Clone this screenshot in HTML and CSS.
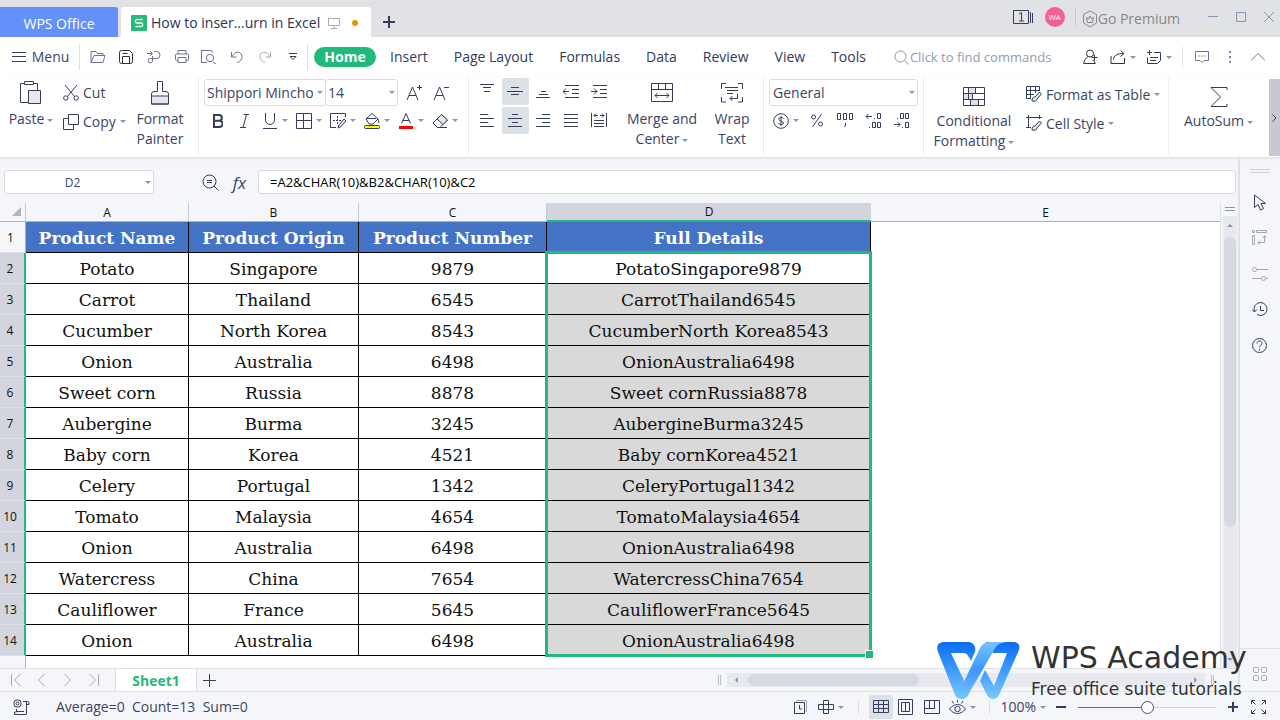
FILE: index.html
```html
<!DOCTYPE html>
<html lang="en">
<head>
    <meta charset="UTF-8">
    <meta name="viewport" content="width=device-width, initial-scale=1.0">
    <title>How to insert a carriage return in Excel - WPS Office</title>
    <link rel="stylesheet" href="styles.css">
</head>
<body>
    <!-- title bar -->
    <header class="titlebar">
        <button class="wps-tab">WPS Office</button>
        <div class="doc-tab">
            <svg width="16" height="16" viewBox="0 0 16 16"><rect width="16" height="16" rx="1" fill="#22bb7b"/><path d="M11.5 4.5H6a1.5 1.5 0 0 0 0 3.500h4a1.700 1.700 0 0 1 0 3.500H4.500" fill="none" stroke="#fff" stroke-width="1.300"/></svg>
            <span class="doc-name">How to inser...urn in Excel</span>
            <svg class="line pale" width="12" height="13" viewBox="0 0 12 13"><path d="M.5 1.500h11v7H.5zM6 8.500v3M3 11.500h6"/></svg>
            <i class="unsaved"></i>
        </div>
        <button class="new-tab" aria-label="New tab"><svg class="line bold" width="12" height="12" viewBox="0 0 12 12"><path d="M6 0v12M0 6h12"/></svg></button>
        <div class="title-right">
            <svg class="line" width="20" height="14" viewBox="0 0 20 14"><path d="M.5.500h15v13H.5zM17.500 2v11M19.500 3v10M6 4l2.500-1.500V11M6 11h5"/></svg>
            <span class="avatar">WA</span>
            <i class="title-sep"></i>
            <a class="premium" href="#"><svg class="line" width="16" height="18" viewBox="0 0 16 18"><path d="M8 1l6.500 3.500v8.500L8 17l-6.500-4V4.500zM4.500 7.500l1 5h5l1-5-2 1.500L8 6 6.500 9z"/></svg>Go Premium</a>
            <button aria-label="Minimize"><svg class="line blue" width="10" height="10" viewBox="0 0 10 10"><path d="M0 4.500h10"/></svg></button>
            <button aria-label="Maximize"><svg class="line blue" width="10" height="10" viewBox="0 0 10 10"><path d="M.5.500h9v9h-9z"/></svg></button>
            <button aria-label="Close"><svg class="line blue" width="10" height="10" viewBox="0 0 10 10"><path d="M0 0l10 10M10 0L0 10"/></svg></button>
        </div>
    </header>

    <!-- menu bar -->
    <nav class="menubar">
        <button class="menu-btn"><svg class="line" width="14" height="12" viewBox="0 0 14 12"><path d="M0 1.500h14M0 5.500h14M0 10.500h14"/></svg>Menu</button>
        <div class="quick">
            <button aria-label="Open"><svg class="line gray" width="16" height="14" viewBox="0 0 16 14"><path d="M1 12.500V1.500h5l1.500 2h5.500v2M1 12.500l3-7h11l-2 7z"/></svg></button>
            <button aria-label="Save"><svg class="line dark" width="14" height="14" viewBox="0 0 14 14"><path d="M2.500.500h8l3 3v8a2 2 0 0 1-2 2h-9a2 2 0 0 1-2-2v-9a2 2 0 0 1 2-2zM3.500 13V6.500h7V13M3.500 3.500h5"/></svg></button>
            <button aria-label="Export"><svg class="line gray" width="14" height="14" viewBox="0 0 14 14"><path d="M0 3.500h5M3 1l2.500 2.500L3 6M7 1.500h2.500a3.500 3.500 0 0 1 0 7H3a2.200 2.200 0 1 0 2.500 2.500V6"/></svg></button>
            <button aria-label="Print"><svg class="line gray" width="14" height="14" viewBox="0 0 14 14"><path d="M3 4V.500h8V4M3 10.500H1.500a1 1 0 0 1-1-1V5a1 1 0 0 1 1-1h11a1 1 0 0 1 1 1v4.500a1 1 0 0 1-1 1H11M3 7.500h8v5H3z"/></svg></button>
            <button aria-label="Preview"><svg class="line gray" width="16" height="14" viewBox="0 0 16 14"><path d="M11.500 2.500a2 2 0 0 0-2-2h-9v12H6M12 12l3 2"/><circle cx="9" cy="8" r="3.700"/></svg></button>
            <button aria-label="Undo"><svg class="line gray" width="12" height="12" viewBox="0 0 12 12"><path d="M.5 1v5h5M.5 6l3-3.500c3-2.500 7.500-1 7.500 3S8 11 6 11.500"/></svg></button>
            <button aria-label="Redo"><svg class="line pale" width="12" height="12" viewBox="0 0 12 12"><path d="M11.500 1v5h-5M11.500 6l-3-3.500c-3-2.500-7.500-1-7.500 3S4 11 6 11.500"/></svg></button>
            <button aria-label="Customize"><svg class="line" width="8" height="8" viewBox="0 0 8 8"><path d="M0 .500h8M1 3.500h6L4 6.500z"/></svg></button>
        </div>
        <div class="tabs">
            <a class="tab active" href="#">Home</a>
            <a class="tab" href="#">Insert</a>
            <a class="tab" href="#">Page Layout</a>
            <a class="tab" href="#">Formulas</a>
            <a class="tab" href="#">Data</a>
            <a class="tab" href="#">Review</a>
            <a class="tab" href="#">View</a>
            <a class="tab" href="#">Tools</a>
        </div>
        <label class="search">
            <svg class="line blue" width="15" height="15" viewBox="0 0 15 15"><circle cx="6.500" cy="6.500" r="5.500"/><path d="M10.500 10.500l4 4"/></svg>
            <input type="text" placeholder="Click to find commands" aria-label="Click to find commands">
        </label>
        <div class="menu-right">
            <button aria-label="Collaborate"><svg class="line dark" width="16" height="16" viewBox="0 0 16 16"><circle cx="7" cy="4.500" r="3.500"/><path d="M5 7.500C3 9 1 11 .8 14.500h11.500l-2-4M8.500 8.500h6M11.500 5.500v6"/></svg></button>
            <button aria-label="Share"><svg class="line dark" width="16" height="14" viewBox="0 0 16 14"><path d="M1 6v7.500h13.500V8M3.500 9.500c0-4 4-6 10-6M10.500.500l3.500 3-3.500 3"/></svg><i class="caret"></i></button>
            <button aria-label="Notes"><svg class="line" width="16" height="14" viewBox="0 0 16 14"><path d="M3.500 0v5M1 2.500h5M8 2.500h6.500v8l-3 3h-10v-6M4 7.500h8M4 10.500h6"/></svg><i class="caret"></i></button>
            <i class="menu-sep"></i>
            <button aria-label="Comments"><svg class="line gray" width="14" height="12" viewBox="0 0 14 12"><path d="M.5.500h13v9H9L7 11.500 5 9.500H.5zM3.500 5h1.500M6.300 5h1.500M9 5h1.500"/></svg></button>
            <button aria-label="More"><svg width="2" height="12" viewBox="0 0 2 12" fill="#7684a5"><path d="M0 0h2v2H0zM0 5h2v2H0zM0 10h2v2H0z"/></svg></button>
            <button aria-label="Collapse ribbon"><svg class="line gray" width="14" height="8" viewBox="0 0 14 8"><path d="M0 7.500l7-7 7 7"/></svg></button>
        </div>
    </nav>

    <!-- ribbon -->
    <section class="ribbon">
        <div class="group clipboard">
            <button class="big paste">
                <svg class="line" width="22" height="24" viewBox="0 0 22 24"><path d="M4 2.500H.5v19H8M14 2.500h3.500V9M4.500.500h9v3h-9z"/><path d="M8.500 9.500h12v13h-12z" fill="#e5e7ee"/></svg>
                <span>Paste<i class="caret"></i></span>
            </button>
            <div class="stack">
                <button class="item"><svg class="line" width="16" height="16" viewBox="0 0 16 16"><path d="M2 0l9.500 11.500M14 0L4.500 11.500"/><circle cx="2.800" cy="13" r="2.200"/><circle cx="13.200" cy="13" r="2.200"/></svg>Cut</button>
                <button class="item"><svg class="line" width="16" height="16" viewBox="0 0 16 16"><path d="M5.500.500h10v10h-10zM5 4.500H.5v11h10V11"/></svg>Copy<i class="caret"></i></button>
            </div>
            <button class="big painter">
                <svg class="line" width="20" height="24" viewBox="0 0 20 24"><path d="M1.500 15h17v8h-17z" fill="#e5e7ee"/><path d="M7.500 10.500v-10h5v10h3.500a2.500 2.500 0 0 1 2.500 2.500v10h-17V13A2.500 2.500 0 0 1 4 10.500z"/></svg>
                <span>Format<br>Painter</span>
            </button>
        </div>

        <div class="group font">
            <div class="row">
                <div class="combo family"><select aria-label="Font"><option>Shippori Mincho</option></select><i class="caret"></i></div>
                <div class="combo size"><select aria-label="Font size"><option>14</option></select><i class="caret"></i></div>
                <button class="slot" aria-label="Increase font size"><svg class="line" width="17" height="16" viewBox="0 0 17 16"><path d="M1 15L6.500 2 12 15M3 10.500h7M11 2.500h5M13.500 0v5"/></svg></button>
                <button class="slot" aria-label="Decrease font size"><svg class="line" width="17" height="16" viewBox="0 0 17 16"><path d="M1 15L6.500 2 12 15M3 10.500h7M11 2.500h5"/></svg></button>
            </div>
            <div class="row">
                <button class="slot" aria-label="Bold"><svg class="line bold" width="11" height="14" viewBox="0 0 11 14"><path d="M2 1h5a2.800 2.800 0 0 1 0 5.700H2h5.500a3 3 0 0 1 0 6.300H2z"/></svg></button>
                <button class="slot" aria-label="Italic"><svg class="line" width="9" height="14" viewBox="0 0 9 14"><path d="M3.500.500H9M0 13.500h6M6.500.500l-3.500 13"/></svg></button>
                <button class="split" aria-label="Underline"><svg class="line" width="16" height="16" viewBox="0 0 16 16"><path d="M3.500 0v7a4.500 4.500 0 0 0 9 0V0M1 15.500h14"/></svg><i class="caret"></i></button>
                <button class="split" aria-label="Borders"><svg class="line" width="16" height="16" viewBox="0 0 16 16"><path d="M.5.500h15v15H.5zM7.500 0v16M0 7.500h16"/></svg><i class="caret"></i></button>
                <button class="split" aria-label="Draw border"><svg class="line" width="16" height="16" viewBox="0 0 16 16"><path d="M15.500 4V.500H.5v14H6"/><path d="M7.500 3v9M3 7.500h9" stroke-dasharray="2 1"/><path d="M8 15l1-3 5-6 2 2-5.500 6z" fill="#e5e7ee"/></svg><i class="caret"></i></button>
                <button class="split" aria-label="Fill color"><svg class="line" width="16" height="16" viewBox="0 0 16 16"><path d="M2 6l6-5.500 6 5.500-5 5H5zM3 5.500h9M14 6l1 4"/><rect x=".500" y="12.500" width="15" height="3" rx="1" fill="#ff0"/></svg><i class="caret"></i></button>
                <button class="split" aria-label="Font color"><svg class="line" width="16" height="16" viewBox="0 0 16 16"><path d="M3.500 10.500L8 .500l4.500 10M5 7.500h6"/><path d="M1 13h14v3H1z" fill="#f00" stroke="none"/></svg><i class="caret"></i></button>
                <button class="split" aria-label="Clear"><svg class="line" width="16" height="16" viewBox="0 0 16 16"><path d="M9.500 1.500l6 5.500-7.500 7.500H5.500L1 10z"/><path d="M9.500 1.500l6 5.500-4.500 4.500L5 6z" fill="#e5e7ee"/><path d="M5 14.500h10"/></svg><i class="caret"></i></button>
            </div>
        </div>

        <div class="group align">
            <div class="align-grid">
                <button aria-label="Top align"><svg class="line" width="15" height="15" viewBox="0 0 15 15"><path d="M0 .500h14M3 3.500h8M4 7.500h6"/></svg></button>
                <button class="on" aria-label="Middle align"><svg class="line" width="17" height="15" viewBox="0 0 17 15"><path d="M4 3.500h8M0 7.500h16M4 10.500h8"/></svg></button>
                <button aria-label="Bottom align"><svg class="line" width="15" height="15" viewBox="0 0 15 15"><path d="M5 7.500h5M3 10.500h9M0 13.500h14"/></svg></button>
                <button aria-label="Decrease indent"><svg class="line" width="17" height="13" viewBox="0 0 17 13"><path d="M2 .500h14M9 4.500h7M9 8.500h7M2 12.500h14M0 6.500h6M3 3.500l-3 3 3 3"/></svg></button>
                <button aria-label="Increase indent"><svg class="line" width="17" height="13" viewBox="0 0 17 13"><path d="M2 .500h14M9 4.500h7M9 8.500h7M2 12.500h14M0 6.500h6M3 3.500l3 3-3 3"/></svg></button>
                <button aria-label="Align left"><svg class="line" width="15" height="13" viewBox="0 0 15 13"><path d="M0 .500h8M0 4.500h14M0 8.500h8M0 12.500h14"/></svg></button>
                <button class="on" aria-label="Center"><svg class="line" width="15" height="13" viewBox="0 0 15 13"><path d="M4 .500h6M0 4.500h14M4 8.500h6M0 12.500h14"/></svg></button>
                <button aria-label="Align right"><svg class="line" width="15" height="13" viewBox="0 0 15 13"><path d="M6 .500h8M0 4.500h14M6 8.500h8M0 12.500h14"/></svg></button>
                <button aria-label="Justify"><svg class="line" width="15" height="13" viewBox="0 0 15 13"><path d="M0 .500h14M0 4.500h14M0 8.500h14M0 12.500h14"/></svg></button>
                <button aria-label="Distributed"><svg class="line" width="17" height="15" viewBox="0 0 17 15"><path d="M.5 0v14M15.500 0v14M3 2.500h4M9 2.500h4M5 .500l-2 2 2 2M11 .500l2 2-2 2M3 7.500h10M3 10.500h10M3 13.500h10"/></svg></button>
            </div>
            <button class="big merge">
                <svg class="line" width="22" height="20" viewBox="0 0 22 20"><path d="M.5.500h21v18H.5zM0 6.500h22M7.500 0v6.500M14.500 0v6.500M4 12.500h14M6.500 10l-2.500 2.500L6.500 15M15.500 10l2.500 2.500-2.500 2.500"/></svg>
                <span>Merge and<br>Center<i class="caret"></i></span>
            </button>
            <button class="big wrap">
                <svg class="line" width="22" height="20" viewBox="0 0 22 20"><path d="M5 .500H.5V6M17 .500h4.500V6M.5 14v5H5M21.500 14v5H17M4 4.500h13M6 7.500h11M6 10.500h6M16.500 10.500V15.500H9M11.500 13L9 15.500l2.500 2.500"/></svg>
                <span>Wrap<br>Text</span>
            </button>
        </div>

        <div class="group number">
            <div class="row">
                <div class="combo format"><select aria-label="Number format"><option>General</option></select><i class="caret"></i></div>
            </div>
            <div class="row">
                <button class="split" aria-label="Currency"><svg class="line" width="16" height="16" viewBox="0 0 16 16"><circle cx="8" cy="8" r="7.300"/><path d="M10.500 5.500C9 4 5.800 4.300 5.800 6.300S10.500 8 10.500 10 7 12 5.500 10.500M8 3v10"/></svg><i class="caret"></i></button>
                <button class="slot" aria-label="Percent"><svg class="line" width="12" height="13" viewBox="0 0 12 13"><circle cx="2.500" cy="3" r="2"/><circle cx="9.500" cy="10" r="2"/><path d="M10.500 0l-9 13"/></svg></button>
                <button class="slot" aria-label="Comma style"><svg class="line" width="18" height="15" viewBox="0 0 18 15"><path d="M1.500.500h3v6h-3zM7.500.500h3v6h-3zM13.500.500h3v6h-3zM9.500 10v2l-1 2"/></svg></button>
                <button class="slot" aria-label="Increase decimal"><svg class="line" width="16" height="15" viewBox="0 0 16 15"><path d="M1 3.500h6M3.500 1L1 3.500 3.500 6M9 5.500h1M12.500.500h3v5h-3zM4 14.500h1M7.500 9.500h3v5h-3zM12.500 9.500h3v5h-3z"/></svg></button>
                <button class="slot" aria-label="Decrease decimal"><svg class="line" width="16" height="15" viewBox="0 0 16 15"><path d="M4 5.500h1M7.500.500h3v5h-3zM12.500.500h3v5h-3zM1 11.500h6M4.500 9L7 11.500 4.500 14M9 14.500h1M12.500 9.500h3v5h-3z"/></svg></button>
            </div>
        </div>

        <div class="group styles">
            <button class="big cond">
                <svg class="line" width="22" height="20" viewBox="0 0 22 20"><path d="M6 1h7v5H6zM1 7h8v6H1zM8 13h7v6H8z" fill="#dfe1e8" stroke="none"/><path d="M.5.500h21v18H.5zM0 6.500h22M0 12.500h22M5.500.500v6M12.500.500v6M9.500 6.500v6M5.500 6.500v6M7.500 12.500v6M15.500 12.500v6"/></svg>
                <span>Conditional<br>Formatting<i class="caret"></i></span>
            </button>
            <div class="stack">
                <button class="item"><svg class="line" width="16" height="17" viewBox="0 0 16 17"><path d="M13.500 5V.500H.5v12H5M0 4.500h14M0 8.500h8M4.500 0v12.500M9.500 0v7"/><path d="M6 15c0-3 1-4 3-4l4.500-5 2 2-4.500 5c0 2-2 2.500-5 2z" fill="#e5e7ee"/></svg>Format as Table<i class="caret"></i></button>
                <button class="item"><svg class="line" width="16" height="17" viewBox="0 0 16 17"><path d="M0 2.500h16M2.500 0v12.500H5M13.500 0v4M0 12.500h5"/><path d="M6 15c0-3 1-4 3-4l4.500-5 2 2-4.500 5c0 2-2 2.500-5 2z" fill="#e5e7ee"/></svg>Cell Style<i class="caret"></i></button>
            </div>
        </div>

        <div class="group editing">
            <button class="big sum">
                <svg class="line" width="18" height="20" viewBox="0 0 18 20"><path d="M17 3V.500H1L10.500 10 1 19.500h16V17"/></svg>
                <span>AutoSum<i class="caret"></i></span>
            </button>
        </div>
        <button class="ribbon-scroll" aria-label="Scroll ribbon"><svg class="line" width="5" height="8" viewBox="0 0 5 8"><path d="M.5.500L4 4 .5 7.500"/></svg></button>
    </section>

    <main class="work">
        <div class="book">
            <!-- formula bar -->
            <div class="formula-bar">
                <div class="name-box"><input type="text" value="D2" aria-label="Name box"><i class="caret"></i></div>
                <button aria-label="Find"><svg class="line" width="17" height="17" viewBox="0 0 17 17"><circle cx="7.500" cy="7.500" r="6.500"/><path d="M5 6.500h5M5 8.500h5M12 12l4.500 4.500"/></svg></button>
                <button class="fx" aria-label="Insert function">fx</button>
                <input class="formula" type="text" value="=A2&amp;CHAR(10)&amp;B2&amp;CHAR(10)&amp;C2" aria-label="Formula">
            </div>

            <div class="sheet-area">
                <table class="sheet">
                    <colgroup><col class="c-num"><col class="c-a"><col class="c-b"><col class="c-c"><col class="c-d"><col></colgroup>
                    <thead>
                        <tr><th class="corner"><svg width="9" height="9" viewBox="0 0 9 9"><path d="M9 0v9H0z" fill="#b4b4b4"/></svg></th><th>A</th><th>B</th><th>C</th><th class="picked">D</th><th>E</th></tr>
                    </thead>
                    <tbody>
                        <tr class="heading"><th>1</th><td>Product Name</td><td>Product Origin</td><td>Product Number</td><td>Full Details</td><td></td></tr>
                        <tr><th>2</th><td>Potato</td><td>Singapore</td><td>9879</td><td class="current">PotatoSingapore9879<span class="selection"></span></td><td></td></tr>
                        <tr><th>3</th><td>Carrot</td><td>Thailand</td><td>6545</td><td>CarrotThailand6545</td><td></td></tr>
                        <tr><th>4</th><td>Cucumber</td><td>North Korea</td><td>8543</td><td>CucumberNorth Korea8543</td><td></td></tr>
                        <tr><th>5</th><td>Onion</td><td>Australia</td><td>6498</td><td>OnionAustralia6498</td><td></td></tr>
                        <tr><th>6</th><td>Sweet corn</td><td>Russia</td><td>8878</td><td>Sweet cornRussia8878</td><td></td></tr>
                        <tr><th>7</th><td>Aubergine</td><td>Burma</td><td>3245</td><td>AubergineBurma3245</td><td></td></tr>
                        <tr><th>8</th><td>Baby corn</td><td>Korea</td><td>4521</td><td>Baby cornKorea4521</td><td></td></tr>
                        <tr><th>9</th><td>Celery</td><td>Portugal</td><td>1342</td><td>CeleryPortugal1342</td><td></td></tr>
                        <tr><th>10</th><td>Tomato</td><td>Malaysia</td><td>4654</td><td>TomatoMalaysia4654</td><td></td></tr>
                        <tr><th>11</th><td>Onion</td><td>Australia</td><td>6498</td><td>OnionAustralia6498</td><td></td></tr>
                        <tr><th>12</th><td>Watercress</td><td>China</td><td>7654</td><td>WatercressChina7654</td><td></td></tr>
                        <tr><th>13</th><td>Cauliflower</td><td>France</td><td>5645</td><td>CauliflowerFrance5645</td><td></td></tr>
                        <tr><th>14</th><td>Onion</td><td>Australia</td><td>6498</td><td>OnionAustralia6498</td><td></td></tr>
                        <tr class="rest"><th></th><td></td><td></td><td></td><td></td><td></td></tr>
                    </tbody>
                </table>
                <div class="vscroll">
                    <svg class="line blue" width="10" height="13" viewBox="0 0 10 13"><path d="M0 4.500h10M0 7.500h10"/></svg>
                    <div class="vtrack"><i class="arrow up"></i><i class="vthumb"></i><i class="arrow down"></i></div>
                </div>
            </div>

            <!-- sheet tabs -->
            <div class="sheet-tabs">
                <div class="sheet-nav">
                    <button aria-label="First sheet"><svg class="line pale" width="10" height="12" viewBox="0 0 10 12"><path d="M.5 0v12M9.500 0l-6 6 6 6"/></svg></button>
                    <button aria-label="Previous sheet"><svg class="line pale" width="8" height="12" viewBox="0 0 8 12"><path d="M6.500 0l-6 6 6 6"/></svg></button>
                    <button aria-label="Next sheet"><svg class="line pale" width="8" height="12" viewBox="0 0 8 12"><path d="M.5 0l6 6-6 6"/></svg></button>
                    <button aria-label="Last sheet"><svg class="line pale" width="10" height="12" viewBox="0 0 10 12"><path d="M9.500 0v12M.5 0l6 6-6 6"/></svg></button>
                </div>
                <button class="sheet-tab">Sheet1</button>
                <button class="add-sheet" aria-label="Add sheet"><svg class="line" width="13" height="13" viewBox="0 0 13 13"><path d="M6.500 0v13M0 6.500h13"/></svg></button>
                <div class="hscroll">
                    <i class="grip"></i>
                    <div class="htrack"><i class="arrow left"></i><i class="hthumb"></i><i class="arrow right"></i></div>
                    <i class="grip"></i>
                </div>
            </div>
        </div>

        <aside class="side">
            <i class="side-grip"></i>
            <button aria-label="Select"><svg class="line" width="14" height="17" viewBox="0 0 14 17"><path d="M1.500 1v12.500l3.500-3 2.500 5.500 3-1.500-2.500-5h4.500z"/></svg></button>
            <button aria-label="Swap"><svg class="line pale" width="16" height="16" viewBox="0 0 16 16"><path d="M.5.500h2v2h-2zM4.500.500h10v2h-10zM.5 5.500h2v9h-2zM6 12.500h6.500V6M10.500 8l2-2.500 2 2.500M8 10.500l-2 2 2 2"/></svg></button>
            <button aria-label="Properties"><svg class="line pale" width="16" height="14" viewBox="0 0 16 14"><circle cx="2.500" cy="2.500" r="2"/><circle cx="11.500" cy="11.500" r="2"/><path d="M4.500 2.500H16M0 11.500h9.500M13.500 11.500H16"/></svg></button>
            <button aria-label="History"><svg class="line" width="16" height="16" viewBox="0 0 16 16"><path d="M2.500 9.500A6.500 6.500 0 1 1 5 12.500M0 7.500l2.500 2.500L5 7.500M8.500 4v4.500H12"/></svg></button>
            <button aria-label="Help"><svg class="line" width="16" height="16" viewBox="0 0 16 16"><circle cx="7.500" cy="7.500" r="7"/><path d="M5 5.500c0-3.300 5-3.300 5 0C10 7.500 7.500 7.500 7.500 9.500M7.500 11v1.500"/></svg></button>
            <button class="apps" aria-label="Apps"><svg class="line pale" width="14" height="14" viewBox="0 0 14 14"><rect x=".500" y=".500" width="5" height="5" rx="1"/><rect x="8.500" y=".500" width="5" height="5" rx="1"/><rect x=".500" y="8.500" width="5" height="5" rx="1"/><rect x="8.500" y="8.500" width="5" height="5" rx="1"/></svg></button>
        </aside>
    </main>

    <!-- status bar -->
    <footer class="statusbar">
        <svg class="line" width="17" height="17" viewBox="0 0 17 17"><circle cx="4.500" cy="4.500" r="3.700"/><circle cx="4.500" cy="4.500" r="1.500"/><path d="M10 2.500h4.500a1.500 1.500 0 0 1 1.500 1.500v1.500h-3M13.500 3v12M3.500 10v3h-2v2.500h12M4 12.500h7"/></svg>
        <span class="stats">Average=0&nbsp;&nbsp;Count=13&nbsp;&nbsp;Sum=0</span>
        <div class="status-right">
            <button class="slot" aria-label="Backup"><svg class="line" width="14" height="14" viewBox="0 0 14 14"><path d="M2.500 1.500V.500h10v11h-1" stroke="#a0a5b0"/><path d="M.5 2.500h10v11H.5zM5.500 5v4H8"/></svg></button>
            <button class="split" aria-label="Reading layout"><svg class="line" width="16" height="14" viewBox="0 0 16 14"><path d="M5.500.500h5v13h-5zM.5 4.500h15v5H.5z"/></svg><i class="caret"></i></button>
            <i class="status-sep"></i>
            <button class="slot on" aria-label="Normal view"><svg class="line" width="16" height="14" viewBox="0 0 16 14"><path d="M.5.500h15v12H.5zM0 4.500h16M0 8.500h16M5.500 0v13M10.500 0v13"/></svg></button>
            <button class="slot" aria-label="Page layout view"><svg class="line" width="16" height="16" viewBox="0 0 16 16"><path d="M.5.500h14v15H.5zM3.500 3.500h8v9h-8zM7.500 3.500v9"/></svg></button>
            <button class="slot" aria-label="Page break view"><svg class="line" width="16" height="14" viewBox="0 0 16 14"><path d="M.5.500h15v13H.5zM5.500 0v8.500M10.500 0v8.500M0 8.500h11"/></svg></button>
            <button class="split" aria-label="Eye protection"><svg class="line" width="17" height="15" viewBox="0 0 17 15"><path d="M.5 9c4.500-6 11.500-6 16 0-4.500 6-11.500 6-16 0zM8.500 0v2.500M3 1l1.500 2.500M14 1l-1.500 2.500"/><circle cx="8.500" cy="9" r="2.700"/></svg><i class="caret"></i></button>
            <i class="status-sep"></i>
            <button class="zoom-value">100%<i class="caret"></i></button>
            <button class="slot" aria-label="Zoom out"><svg class="line bold" width="10" height="10" viewBox="0 0 10 10"><path d="M0 5h10"/></svg></button>
            <input class="zoom" type="range" min="0" max="100" value="50" aria-label="Zoom">
            <button class="slot" aria-label="Zoom in"><svg class="line bold" width="10" height="10" viewBox="0 0 10 10"><path d="M0 5h10M5 0v10"/></svg></button>
            <button class="slot" aria-label="Full screen"><svg class="line" width="16" height="14" viewBox="0 0 16 14"><path d="M.5 4V.500H4M.5.500l4 4M11 .500h3.500V4M14.500.500l-4 4M.5 10v3.500H4M.5 13.500l4-4M11 13.500h3.500V10M14.500 13.500l-4-4"/></svg></button>
        </div>
    </footer>

    <!-- academy logo over the lower right corner -->
    <div class="watermark">
        <svg width="84" height="58" viewBox="0 0 84 58">
            <defs>
                <linearGradient id="front" x1="0" y1="0" x2="0" y2="1"><stop offset="0" stop-color="#0a6cf5"/><stop offset=".5" stop-color="#3f9bfb"/><stop offset="1" stop-color="#7cc9ff"/></linearGradient>
                <linearGradient id="fold" x1="0" y1="0" x2="0" y2="1"><stop offset="0" stop-color="#74c4ff"/><stop offset=".5" stop-color="#3f95fb"/><stop offset="1" stop-color="#78c6ff"/></linearGradient>
            </defs>
            <path d="M7 0h25q5 0 7 5 1 4-1 7l-3 7q-1-3-3-5-1-3-5-3H15l17 36-2 8q-2 2-5 2-4 0-6-4L2 10Q-1 1 7 0z" fill="url(#front)"/>
            <path d="M50 0h27q8 0 6 8L63 53q-2 4-6 4t-6-4l-7-14 5-11 9 16 13-33H57z" fill="url(#front)"/>
            <path d="M54 0h16q-9 1-12 8L32 53q-2 4-6 4t-6-4l6-9L44 6q3-6 10-6z" fill="url(#fold)"/>
        </svg>
        <div>
            <p class="brand">WPS Academy</p>
            <p class="slogan">Free office suite tutorials</p>
        </div>
    </div>
</body>
</html>
```
FILE: styles.css
```css
* {
    box-sizing: border-box;
}
body {
    margin: 0;
    min-height: 100vh;
    display: flex;
    flex-direction: column;
    position: relative;
    overflow-x: hidden;
    background: #f5f6f9;
    color: #3b4563;
    font-family: "Open Sans", "Noto Sans", sans-serif;
    font-size: 14px;
    line-height: 20px;
}
button, input, select {
    font: inherit;
    color: inherit;
    background: none;
    border: none;
    margin: 0;
    padding: 0;
}
button {
    display: flex;
    align-items: center;
    justify-content: center;
}
a {
    color: inherit;
    text-decoration: none;
}
svg {
    display: block;
    flex: none;
}

/* icons */
.line {
    fill: none;
    stroke: #343e5c;
    stroke-width: 1;
}
.line.bold {
    stroke-width: 2;
}
.line.dark {
    stroke: #333;
}
.line.gray {
    stroke: #6b7590;
}
.line.blue {
    stroke: #8795b5;
}
.line.pale {
    stroke: #a5a8b0;
}
.caret {
    display: inline-block;
    flex: none;
    width: 0;
    border: 3px solid transparent;
    border-top-color: #8795b5;
    border-bottom: none;
}

/* title bar */
.titlebar {
    display: flex;
    height: 37px;
    background: #e1e2e6;
}
.wps-tab {
    width: 118px;
    margin-top: 7px;
    padding-top: 3px;
    background: #6490fa;
    color: #fff;
    border-radius: 0 3px 0 0;
}
.doc-tab {
    display: flex;
    align-items: center;
    width: 250px;
    margin: 7px 0 0 3px;
    padding: 2px 10px 0;
    background: #fff;
    border-radius: 3px 3px 0 0;
}
.doc-name {
    margin: 0 8px 0 4px;
    white-space: nowrap;
    color: #2c3350;
}
.unsaved {
    width: 6px;
    height: 6px;
    margin-left: 12px;
    border-radius: 50%;
    background: #e59700;
}
.new-tab {
    width: 36px;
    padding-top: 7px;
}
.title-right {
    display: flex;
    align-items: center;
    height: 34px;
    margin-left: auto;
}
.title-right button {
    width: 22px;
    margin-left: 6px;
}
.avatar {
    width: 20px;
    margin: 0 10px 0 12px;
    border-radius: 50%;
    background: #f2608f;
    color: #fff;
    font-size: 8px;
    text-align: center;
}
.title-sep {
    width: 1px;
    height: 20px;
    background: #c8cad0;
}
.premium {
    display: flex;
    align-items: center;
    margin: 3px 16px 0 6px;
    color: #888;
}
.premium .line {
    stroke: #888;
}

/* menu bar */
.menubar {
    display: flex;
    align-items: center;
    height: 40px;
    background: #fff;
}
.menu-btn {
    width: 80px;
    height: 26px;
    padding-left: 2px;
    gap: 6px;
    border-right: 1px solid #dfe0e5;
}
.quick {
    display: flex;
    width: 228px;
    height: 26px;
    padding-left: 4px;
    border-right: 1px solid #dfe0e5;
}
.quick button {
    width: 28px;
}
.tabs {
    display: flex;
    gap: 26px;
    margin-left: 6px;
    color: #333c58;
    white-space: nowrap;
}
.tab.active {
    width: 62px;
    margin-right: -12px;
    background: #22b97c;
    border-radius: 10px;
    color: #fff;
    font-weight: bold;
    text-align: center;
}
.search {
    display: flex;
    align-items: center;
    flex: 1;
    min-width: 0;
    margin-left: 28px;
}
.search input {
    width: 150px;
    font-size: 13px;
    margin-left: 1px;
}
.search input::placeholder {
    color: #8f9cb8;
    opacity: 1;
}
.menu-right {
    display: flex;
    align-items: center;
    padding-right: 8px;
}
.menu-right button {
    width: 28px;
    gap: 4px;
}
.menu-right button:nth-child(2), .menu-right button:nth-child(3) {
    width: 36px;
}
.menu-sep {
    width: 1px;
    height: 20px;
    margin: 0 5px;
    background: #dfe0e5;
}

/* ribbon */
.ribbon {
    display: flex;
    height: 81px;
    padding-top: 1px;
    background: #fff;
    border-bottom: 1px solid #e3e4e9;
    box-shadow: 0 1px 3px #e6e7ec;
    overflow: hidden;
    position: relative;
    white-space: nowrap;
}
.group {
    height: 77px;
    flex: none;
    border-right: 1px solid #ecedf0;
}
.row {
    display: flex;
    height: 27px;
    margin-top: 1px;
}
.slot {
    width: 28px;
}
.font .slot {
    width: 27px;
}
.split {
    width: 34px;
    gap: 4px;
}
.big {
    flex-direction: column;
    justify-content: flex-start;
}
.big svg {
    height: 24px;
    margin: 3px 0 4px;
}
.big .caret, .item .caret {
    margin-left: 3px;
    vertical-align: middle;
}
.stack {
    display: flex;
    flex-direction: column;
    gap: 8px;
    padding-top: 4px;
}
.item {
    justify-content: flex-start;
    height: 21px;
    gap: 4px;
}
.item .caret {
    margin-left: 0;
}
.clipboard {
    display: flex;
    width: 199px;
    padding-left: 9px;
}
.paste {
    width: 44px;
}
.clipboard .stack {
    width: 74px;
    padding-left: 10px;
}
.painter {
    width: 66px;
}
.font {
    width: 270px;
    padding-left: 5px;
}
.combo {
    position: relative;
    width: 122px;
    height: 27px;
    border: 1px solid #dcdde2;
    border-radius: 3px;
}
.combo select {
    appearance: none;
    width: 100%;
    height: 25px;
    padding: 0 12px 0 2px;
    overflow: hidden;
}
.combo .caret {
    position: absolute;
    right: 2px;
    top: 11px;
}
.combo.size {
    width: 73px;
    margin: 0 3px 0 -1px;
}
.combo.format {
    width: 149px;
}
.combo.format select {
    padding-left: 3px;
}
.align {
    display: flex;
    width: 295px;
    padding-left: 5px;
}
.align-grid {
    display: grid;
    grid-template-columns: repeat(5, 27px);
    grid-template-rows: 27px 27px;
    gap: 2px 1px;
    align-content: start;
}
.on {
    background: #dce1e6;
    border-radius: 2px;
}
.merge {
    width: 74px;
    margin: 0 14px 0 12px;
}
.wrap {
    width: 38px;
}
.number {
    width: 160px;
    padding-left: 5px;
}
.styles {
    display: flex;
    width: 245px;
    padding-left: 9px;
}
.cond {
    width: 82px;
}
.cond svg, .sum svg {
    margin: 7px 0 2px;
}
.styles .stack {
    gap: 8px;
    padding: 6px 0 0 11px;
}
.editing {
    flex: 1;
    border: none;
    padding-left: 15px;
}
.ribbon-scroll {
    flex: none;
    width: 11px;
    height: 77px;
    margin-top: 1px;
    background: #c8c9d0;
}

/* work area */
.work {
    display: flex;
    flex: 1;
}
.book {
    display: flex;
    flex-direction: column;
    flex: 1;
    min-width: 0;
}
.formula-bar {
    display: flex;
    align-items: center;
    height: 45px;
    padding: 3px 2px 0 4px;
}
.formula-bar button {
    width: 29px;
}
.name-box {
    position: relative;
    width: 150px;
    margin-right: 42px;
}
.name-box input {
    display: block;
    width: 100%;
    height: 24px;
    padding-right: 13px;
    text-align: center;
    font-size: 12px;
    background: #fff;
    border: 1px solid #d8dae0;
    border-radius: 3px;
}
.name-box .caret {
    position: absolute;
    right: 3px;
    top: 11px;
}
.formula-bar .fx {
    font: italic 17px "Open Sans", sans-serif;
}
.formula {
    flex: 1;
    min-width: 0;
    height: 24px;
    margin-left: 4px;
    padding: 0 11px;
    background: #fff;
    border: 1px solid #d8dae0;
    border-radius: 3px;
    color: #000;
    font-size: 13px;
}

/* sheet */
.sheet-area {
    display: flex;
    flex: 1;
}
.sheet {
    flex: 1;
    width: 100%;
    table-layout: fixed;
    border-collapse: separate;
    border-spacing: 0;
    background: #fff;
    color: #111;
}
.c-num {
    width: 26px;
}
.c-a {
    width: 163px;
}
.c-b {
    width: 170px;
}
.c-c {
    width: 188px;
}
.c-d {
    width: 324px;
}
.sheet th, .sheet td {
    height: 31px;
    padding: 0;
    text-align: center;
    white-space: nowrap;
}
.sheet th {
    font-size: 12px;
    font-weight: normal;
}
.sheet thead th {
    height: 19px;
    line-height: 17px;
    background: #f5f6f9;
    border-right: 1px solid #c6cbdb;
    border-bottom: 1px solid #a9b2c8;
}
.sheet thead th:last-child {
    border-right: none;
}
.sheet thead .picked {
    background: #d2d5dd;
    border-right: none;
    border-bottom: 2px solid #22b97c;
}
.corner svg {
    margin: 0 4px 2px auto;
}
.sheet tbody th {
    padding: 2px 4px 0 0;
    background: #d2d5dd;
    border-right: 2px solid #22b97c;
    border-bottom: 1px solid #dddfe6;
}
.sheet td {
    padding-top: 2px;
    border-right: 1px solid #000;
    border-bottom: 1px solid #000;
    font-family: "DejaVu Serif", serif;
    font-size: 17px;
    line-height: 28px;
}
.sheet td:nth-child(5) {
    background: #d9d9d9;
}
.sheet td:last-child {
    border: none;
    background: #fff;
}
.sheet .heading th {
    background: #f5f6f9;
    border-right: 1px solid #a9b2c8;
}
.sheet .heading td {
    background: #4472c4;
    color: #fff;
    font-weight: bold;
}
.sheet .heading td:last-child {
    background: #fff;
}
.sheet .current {
    position: relative;
    background: #fff !important;
}
.selection {
    position: absolute;
    left: -2px;
    right: -2px;
    top: -2px;
    height: 406px;
    border: 3px solid #22b97c;
}
.selection::after {
    content: "";
    position: absolute;
    right: -4px;
    bottom: -4px;
    width: 7px;
    height: 7px;
    background: #22b97c;
    border: 1px solid #fff;
    border-width: 1px 0 0 1px;
}
.sheet .rest th, .sheet .rest td {
    height: 12px;
    padding: 0;
    border-bottom: none;
    background: #fff;
}
.sheet .rest td {
    border: none;
    line-height: 10px;
}
.sheet .rest th {
    background: #f5f6f9;
    border-right: 1px solid #a9b2c8;
}
.vscroll {
    display: flex;
    flex-direction: column;
    align-items: center;
    width: 18px;
    border-left: 1px solid #e0e1e7;
}
.vtrack {
    display: flex;
    flex-direction: column;
    align-items: center;
    flex: 1;
    width: 14px;
    background: #e8e9ee;
}
.vthumb {
    width: 12px;
    height: 290px;
    border-radius: 6px;
    background: #d6d9e1;
}
.arrow {
    width: 0;
    border: 3px solid transparent;
}
.up {
    margin: 5px 0 10px;
    border-bottom-color: #8795b5;
}
.down {
    margin: auto 0 4px;
    border-top-color: #8795b5;
}

/* sheet tabs */
.sheet-tabs {
    display: flex;
    height: 23px;
    border-top: 1px solid #e0e1e7;
}
.sheet-nav {
    display: flex;
    width: 116px;
    padding-left: 3px;
    border-right: 1px solid #e0e1e7;
}
.sheet-nav button {
    width: 26px;
}
.sheet-tab {
    width: 81px;
    padding-top: 2px;
    background: #fff;
    border-right: 1px solid #e0e1e7;
    color: #22b97c;
    font-weight: bold;
}
.add-sheet {
    width: 24px;
}
.hscroll {
    display: flex;
    align-items: center;
    gap: 6px;
    width: 496px;
    margin: 0 24px 0 auto;
}
.grip {
    width: 3px;
    height: 10px;
    border: 1px solid #b6bdcd;
    border-width: 0 1px;
}
.htrack {
    display: flex;
    align-items: center;
    flex: 1;
    height: 14px;
    background: #e8e9ee;
}
.left {
    margin: 0 10px 0 5px;
    border-right-color: #8795b5;
}
.hthumb {
    width: 171px;
    height: 12px;
    border-radius: 6px;
    background: #d6d9e1;
}
.right {
    margin: 0 5px 0 auto;
    border-left-color: #8795b5;
}

/* side panel */
.side {
    display: flex;
    flex-direction: column;
    align-items: center;
    width: 42px;
    padding-top: 11px;
    border-left: 2px solid #e0e1e7;
}
.side button {
    width: 36px;
    height: 36px;
}
.side-grip {
    width: 20px;
    height: 4px;
    margin-bottom: 11px;
    border: 1px solid #d0d2d8;
    border-width: 1px 0;
}
.side .apps {
    width: 100%;
    height: 43px;
    margin-top: auto;
    padding-top: 8px;
    border-top: 1px solid #e0e1e7;
}

/* status bar */
.statusbar {
    display: flex;
    align-items: center;
    height: 29px;
    padding: 2px 8px 0 13px;
    border-top: 1px solid #e0e1e7;
}
.stats {
    margin-left: 26px;
}
.status-right {
    display: flex;
    align-items: center;
    margin-left: auto;
}
.statusbar .slot {
    width: 26px;
    height: 24px;
}
.statusbar .on {
    width: 24px;
}
.status-sep {
    width: 1px;
    height: 14px;
    margin: 0 10px;
    background: #dcdee4;
}
.zoom-value {
    gap: 4px;
    margin-right: 2px;
}
.statusbar .zoom {
    appearance: none;
    width: 138px;
    height: 14px;
    margin: 0 4px;
    background: linear-gradient(90deg, #56708c 50%, #d2d5dc 50%) center / 100% 1px no-repeat;
}
.zoom::-webkit-slider-thumb {
    appearance: none;
    width: 13px;
    height: 13px;
    border: 1px solid #555;
    border-radius: 50%;
    background: #fff;
}

/* logo */
.watermark {
    position: absolute;
    right: 28px;
    bottom: 16px;
    display: flex;
    gap: 11px;
    width: 316px;
    color: #333;
    font-family: "DejaVu Sans", sans-serif;
    white-space: nowrap;
    pointer-events: none;
}
.watermark p {
    margin: 0;
}
.brand {
    font-size: 30px;
    line-height: 32px;
}
.slogan {
    font-size: 17px;
    line-height: 30px;
}
```
